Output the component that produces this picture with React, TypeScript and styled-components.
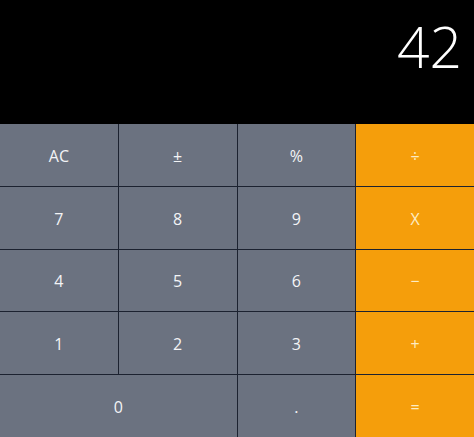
import React from "react";
import styled, { createGlobalStyle } from "styled-components";

const GlobalStyle = createGlobalStyle`
    html, body {
        margin: 0;
        padding: 0;
        background: #000;
    }
    body {
        font-family: "Open Sans", "Noto Sans", sans-serif;
    }
`

const Calculator = styled.div`
    width: 474px;
    height: 437px;
    display: flex;
    flex-direction: column;
    background: #000;
`

const Display = styled.div`
    height: 124px;
    display: flex;
    justify-content: flex-end;
    align-items: flex-start;
    padding: 6px 12px 0 0;
    box-sizing: border-box;
    color: #fff;
    font-size: 57px;
    font-weight: 300;
    line-height: 80px;
`

const Keypad = styled.div`
    flex: 1;
    display: grid;
    grid-template-columns: repeat(4, 1fr);
    grid-template-rows: repeat(5, 1fr);
    gap: 1px;
    background: #1c2230;
`

const Key = styled.button<{ $op?: boolean; $wide?: boolean }>`
    border: none;
    margin: 0;
    padding: 2px 0 0;
    font-family: "Open Sans", "Noto Sans", sans-serif;
    font-size: 16px;
    background: ${p => p.$op ? "#f59e0b" : "#6b7280"};
    color: ${p => p.$op ? "#fdecc4" : "#f3f4f6"};
    grid-column: ${p => p.$wide ? "span 2" : "auto"};
    display: flex;
    align-items: center;
    justify-content: center;
`

const keys = [
    { label: "AC" }, { label: "±" }, { label: "%" }, { label: "÷", op: true },
    { label: "7" }, { label: "8" }, { label: "9" }, { label: "X", op: true },
    { label: "4" }, { label: "5" }, { label: "6" }, { label: "−", op: true },
    { label: "1" }, { label: "2" }, { label: "3" }, { label: "+", op: true },
    { label: "0", wide: true }, { label: "." }, { label: "=", op: true },
]

export default function App() {
    return (
        <>
            <GlobalStyle />
            <Calculator>
                <Display>42</Display>
                <Keypad>
                    {keys.map(k => (
                        <Key key={k.label} $op={k.op} $wide={k.wide}>{k.label}</Key>
                    ))}
                </Keypad>
            </Calculator>
        </>
    )
}
